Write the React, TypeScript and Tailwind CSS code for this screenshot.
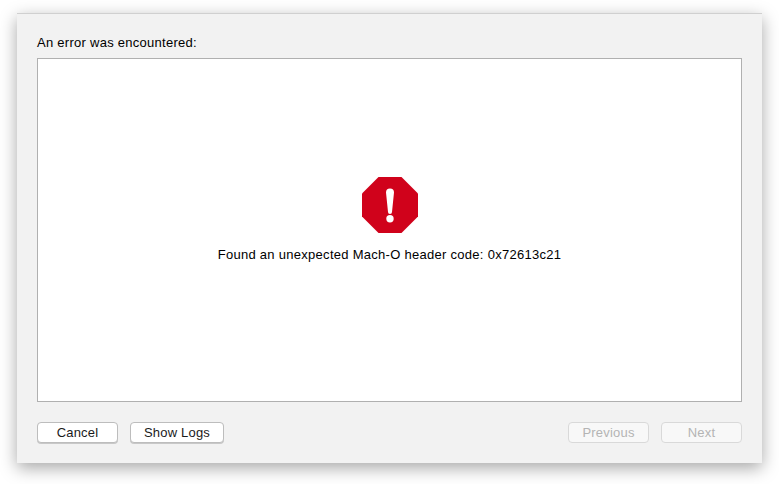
import React from "react";

const font = "font-['Liberation_Sans',Arial,sans-serif]";

function Btn({ label, width, disabled }: { label: string; width: string; disabled?: boolean }) {
  return (
    <button
      disabled={disabled}
      className={`${width} h-[21px] rounded-[4px] border text-[13px] leading-[19px] tracking-[0.2px] ${
        disabled
          ? "border-[#d9d9d9] bg-[#f8f8f8] text-[#b4b4b4]"
          : "border-[#bdbdbd] bg-white text-[#1a1a1a] shadow-[0_1px_0_#c8c8c8]"
      }`}
    >
      {label}
    </button>
  );
}

export default function App() {
  return (
    <div className={`${font} w-[779px] h-[484px] bg-white pt-[13px] pl-[17px] overflow-hidden`}>
      <div className="w-[745px] h-[450px] flex flex-col bg-[#f2f2f2] border-t border-[#d0d0d0] px-5 shadow-[0_5px_16px_rgba(0,0,0,0.35)]">
        <div className="h-[44px] pt-[21px] text-[13px] leading-[16px] tracking-[0.27px] text-black">
          An error was encountered:
        </div>
        <div className="h-[344px] flex flex-col items-center border border-[#b0b0b0] bg-white pt-[118px]">
          <svg width="56" height="56" viewBox="0 0 56 56" className="block">
            <polygon points="16.5,0 39.5,0 56,16.5 56,39.5 39.5,56 16.5,56 0,39.5 0,16.5" fill="#d0021b" />
            <path d="M24 15.5a4 4 0 0 1 8 0L30 35a2 2 0 0 1-4 0Z" fill="#fff" />
            <circle cx="28" cy="41.7" r="3.7" fill="#fff" />
          </svg>
          <p className="mt-[14px] text-[13px] leading-[16px] tracking-[0.28px] text-black">
            Found an unexpected Mach-O header code: 0x72613c21
          </p>
        </div>
        <div className="mt-5 flex items-start">
          <div className="flex gap-3">
            <Btn label="Cancel" width="w-[81px]" />
            <Btn label="Show Logs" width="w-[94px]" />
          </div>
          <div className="ml-auto flex gap-3">
            <Btn label="Previous" width="w-[81px]" disabled />
            <Btn label="Next" width="w-[81px]" disabled />
          </div>
        </div>
      </div>
    </div>
  );
}
